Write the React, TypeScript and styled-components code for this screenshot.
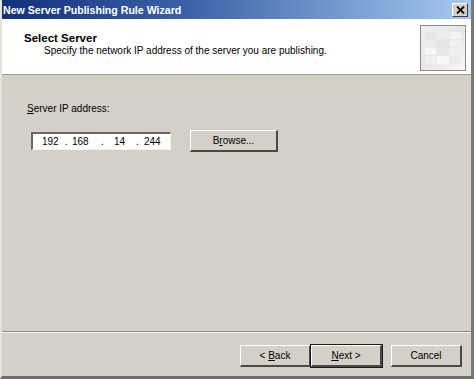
import React from "react";
import styled, { createGlobalStyle } from "styled-components";

const GlobalStyle = createGlobalStyle`
  html, body {
    margin: 0;
    padding: 0;
    background: #d4d0c8;
  }
  body {
    font-family: "Liberation Sans", Arial, sans-serif;
    font-size: 10px;
    color: #000;
  }
`;

const Window = styled.div`
  width: 474px;
  height: 379px;
  box-sizing: border-box;
  display: flex;
  flex-direction: column;
  background: #d4d0c8;
  border-left: 2px solid #e6e3dd;
  border-right: 3px solid #7c7a76;
  border-bottom: 3px solid #6f6d6a;
  overflow: hidden;
`;

const TitleBar = styled.div`
  height: 19px;
  flex: none;
  box-sizing: border-box;
  display: flex;
  align-items: center;
  justify-content: space-between;
  padding: 1px 3px 0 3px;
  margin-left: -2px;
  background: linear-gradient(to right, #12307a 0%, #3d62a8 40%, #a6caf0 100%);
`;

const Title = styled.span`
  color: #fff;
  font-weight: bold;
  font-size: 10.6px;
`;

const CloseButton = styled.div`
  width: 16px;
  height: 14px;
  box-sizing: border-box;
  background: #d4d0c8;
  border-top: 1px solid #fff;
  border-left: 1px solid #fff;
  border-right: 1px solid #404040;
  border-bottom: 1px solid #404040;
  display: flex;
  align-items: center;
  justify-content: center;
`;

const Header = styled.div`
  height: 56px;
  flex: none;
  box-sizing: border-box;
  background: #fff;
  border-bottom: 1px solid #9c9a96;
  display: flex;
  align-items: center;
  justify-content: space-between;
  padding: 0 5px 0 24px;
  margin-left: -2px;
`;

const HeaderText = styled.div`
  display: flex;
  flex-direction: column;
  gap: 1px;
  margin-top: -6px;
`;

const HeaderTitle = styled.div`
  font-weight: bold;
  font-size: 11.5px;
`;

const HeaderSub = styled.div`
  padding-left: 20px;
  font-size: 10px;
`;

const HeaderIcon = styled.div`
  width: 46px;
  height: 46px;
  margin-top: 2px;
  box-sizing: border-box;
  border: 1px solid #8a8a8a;
  background: linear-gradient(135deg, #f0f0f0 0%, #e6e6e6 50%, #f8f8f8 100%);
  display: grid;
  grid-template-columns: 1fr 1fr 1fr;
  grid-template-rows: repeat(4, 1fr);
  gap: 1px;
  padding: 6px 4px;
`;

const IconCell = styled.div<{ shade: string }>`
  background: ${(p) => p.shade};
`;

const Body = styled.div`
  flex: 1;
  display: flex;
  flex-direction: column;
  padding: 28px 0 0 25px;
`;

const FieldLabel = styled.div`
  font-size: 10px;
  margin-bottom: 16px;
`;

const Key = styled.span`
  text-decoration: underline;
`;

const FieldRow = styled.div`
  display: flex;
  align-items: center;
  gap: 19px;
  margin-left: 4px;
`;

const IpBox = styled.div`
  width: 140px;
  height: 18px;
  box-sizing: border-box;
  background: #fff;
  border-top: 2px solid #6a6864;
  border-left: 2px solid #6a6864;
  border-right: 1px solid #f4f2ee;
  border-bottom: 1px solid #f4f2ee;
  display: grid;
  grid-template-columns: 23px 7px 29px 13px 22px 8px auto;
  align-items: center;
  padding-left: 9px;
  font-size: 10px;
`;

const Octet = styled.span``;

const Dot = styled.span``;

const Button = styled.div<{ $default?: boolean; $w: number }>`
  width: ${(p) => p.$w}px;
  height: 22px;
  box-sizing: border-box;
  display: flex;
  align-items: center;
  justify-content: center;
  background: #d4d0c8;
  font-size: 10px;
  border-top: 1px solid #fff;
  border-left: 1px solid #fff;
  border-right: 2px solid #4a4846;
  border-bottom: 2px solid #4a4846;
  outline: ${(p) => (p.$default ? "1px solid #1a1a1a" : "none")};
`;

const ButtonLabel = styled.span`
  white-space: pre;
`;

const Separator = styled.div`
  height: 1px;
  flex: none;
  background: #8e8c88;
  border-bottom: 1px solid #f2f0ec;
  margin-left: -2px;
`;

const Footer = styled.div`
  height: 43px;
  flex: none;
  box-sizing: border-box;
  display: flex;
  justify-content: flex-end;
  align-items: flex-start;
  padding: 12px 9px 0 0;
  gap: 9px;
`;

const NavGroup = styled.div`
  display: flex;
`;

const shades = [
  "#e8e8e8", "#eeeeee", "#f4f4f4",
  "#ececec", "#e6e6e6", "#f2f2f2",
  "#f6f6f6", "#e9e9e9", "#efefef",
  "#f0f0f0", "#f8f8f8", "#ebebeb",
];

const App = () => {
  return (
    <>
      <GlobalStyle />
      <Window>
        <TitleBar>
          <Title>New Server Publishing Rule Wizard</Title>
          <CloseButton>
            <svg width="9" height="8" viewBox="0 0 9 8">
              <path d="M1 0.5 L8 7.5 M8 0.5 L1 7.5" stroke="#000" strokeWidth="1.8" />
            </svg>
          </CloseButton>
        </TitleBar>
        <Header>
          <HeaderText>
            <HeaderTitle>Select Server</HeaderTitle>
            <HeaderSub>Specify the network IP address of the server you are publishing.</HeaderSub>
          </HeaderText>
          <HeaderIcon>
            {shades.map((s, i) => (
              <IconCell key={i} shade={s} />
            ))}
          </HeaderIcon>
        </Header>
        <Body>
          <FieldLabel>
            <Key>S</Key>erver IP address:
          </FieldLabel>
          <FieldRow>
            <IpBox>
              <Octet>192</Octet>
              <Dot>.</Dot>
              <Octet>168</Octet>
              <Dot>.</Dot>
              <Octet>14</Octet>
              <Dot>.</Dot>
              <Octet>244</Octet>
            </IpBox>
            <Button $w={88}>
              <ButtonLabel>
                B<Key>r</Key>owse...
              </ButtonLabel>
            </Button>
          </FieldRow>
        </Body>
        <Separator />
        <Footer>
          <NavGroup>
            <Button $w={71}>
              <ButtonLabel>
                {"< "}
                <Key>B</Key>ack
              </ButtonLabel>
            </Button>
            <Button $w={71} $default>
              <ButtonLabel>
                <Key>N</Key>
                {"ext >"}
              </ButtonLabel>
            </Button>
          </NavGroup>
          <Button $w={71}>
            <ButtonLabel>Cancel</ButtonLabel>
          </Button>
        </Footer>
      </Window>
    </>
  );
};

export default App;
